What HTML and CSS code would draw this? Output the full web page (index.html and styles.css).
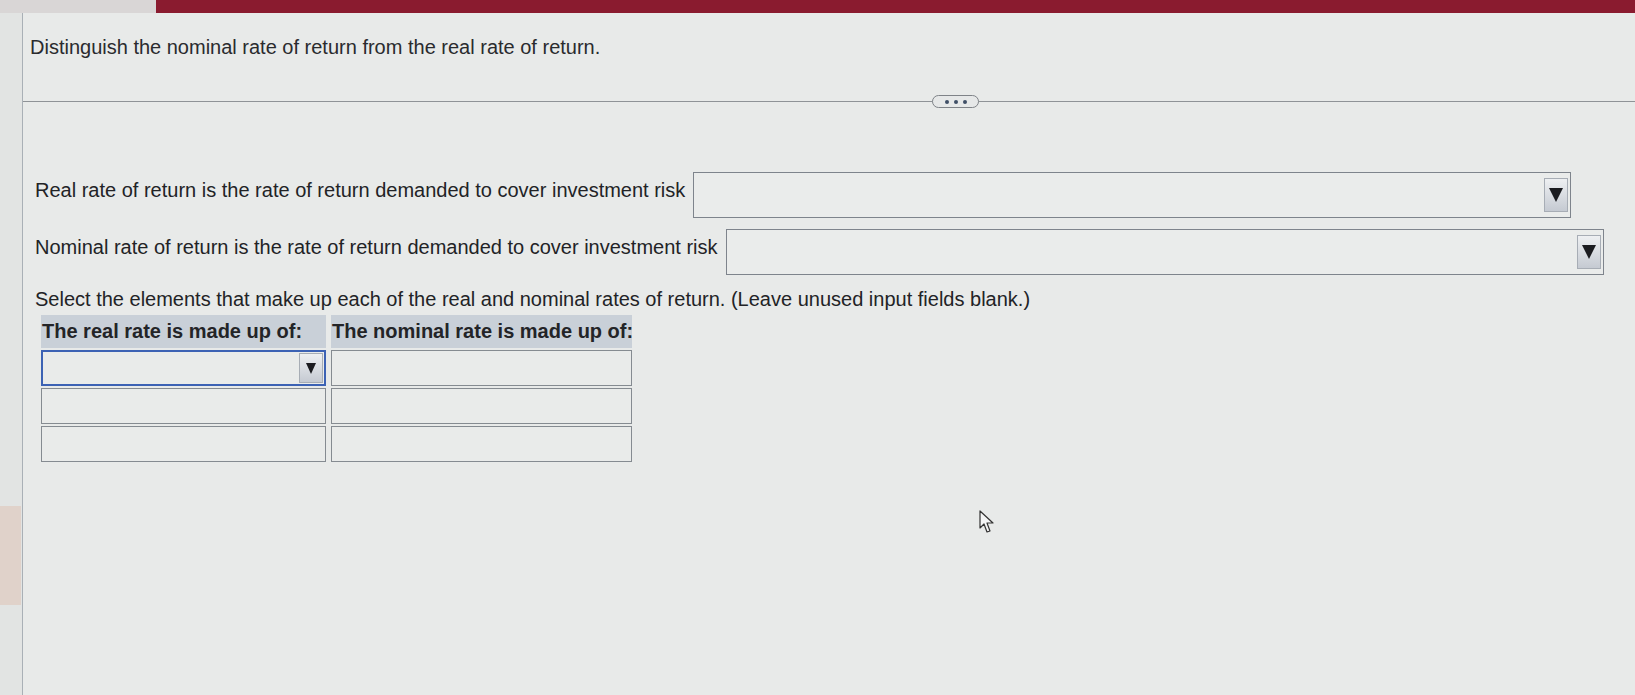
FILE: index.html
```html
<!DOCTYPE html>
<html>
<head>
<meta charset="utf-8">
<link rel="stylesheet" href="styles.css">
</head>
<body>
<div class="page">
  <div class="topbar"><div class="topbar-left"></div><div class="topbar-red"></div></div>
  <div class="layout">
    <div class="side"><div class="side-block"></div></div>
    <div class="main">
      <h1 class="title">Distinguish the nominal rate of return from the real rate of return.</h1>
      <div class="divider"><span class="pill"><i></i><i></i><i></i></span></div>
      <div class="qrow first">
        <span class="qtext">Real rate of return is the rate of return demanded to cover investment risk</span>
        <div class="select wide"><span class="btn"><span class="tri"></span></span></div>
      </div>
      <div class="qrow second">
        <span class="qtext">Nominal rate of return is the rate of return demanded to cover investment risk</span>
        <div class="select wide"><span class="btn"><span class="tri"></span></span></div>
      </div>
      <p class="instr">Select the elements that make up each of the real and nominal rates of return. (Leave unused input fields blank.)</p>
      <div class="grid">
        <div class="gh">The real rate is made up of:</div>
        <div class="gh">The nominal rate is made up of:</div>
        <div class="cell focus"><span class="btn small"><span class="tri sm"></span></span></div>
        <div class="cell"></div>
        <div class="cell"></div>
        <div class="cell"></div>
        <div class="cell"></div>
        <div class="cell"></div>
      </div>
    </div>
  </div>
  <svg class="cursor" width="20" height="26" viewBox="0 0 20 26">
    <path d="M2 2 L2 19 L6 15 L9 23 L12 22 L9 14 L15 14 Z" fill="#f4f5f5" stroke="#333" stroke-width="1.2" stroke-linejoin="round"/>
  </svg>
</div>
</body>
</html>
```

FILE: styles.css
```css
html, body {
  margin: 0;
  padding: 0;
}
body {
  background: #e5e7e6;
  font-family: "Liberation Sans", Arial, sans-serif;
  color: #1e1f21;
  width: 1635px;
  height: 695px;
  overflow: hidden;
}
.page {
  position: relative;
  height: 695px;
}
.topbar {
  display: flex;
  height: 13px;
}
.topbar-left {
  width: 156px;
  background: #d9d6d6;
}
.topbar-red {
  flex: 1;
  background: #8a1b2f;
}
.layout {
  display: grid;
  grid-template-columns: 23px 1fr;
  height: 682px;
}
.side {
  background: #e2e4e3;
  border-right: 1px solid #a9b0b6;
  padding-top: 493px;
}
.side-block {
  height: 99px;
  width: 21px;
  background: #e0d2ca;
}
.main {
  background: #e8eae9;
}
.title {
  margin: 22px 0 0 7px;
  font-size: 20px;
  line-height: 24px;
  font-weight: normal;
  color: #2a2b2e;
}
.divider {
  margin-top: 42px;
  height: 1px;
  background: #8f9397;
  position: relative;
}
.pill {
  position: absolute;
  left: 909px;
  top: -6px;
  width: 45px;
  height: 11px;
  border: 1px solid #7f8388;
  border-radius: 7px;
  background: #e6e8e8;
  display: flex;
  align-items: center;
  justify-content: center;
  gap: 5px;
}
.pill i {
  display: block;
  width: 4px;
  height: 4px;
  border-radius: 50%;
  background: #3f4f66;
}
.qrow {
  display: flex;
  align-items: center;
  gap: 8px;
  margin-left: 12px;
}
.qrow.first {
  margin-top: 70px;
}
.qrow.second {
  margin-top: 11px;
}
.qtext {
  font-size: 20px;
  line-height: 24px;
  color: #222326;
  white-space: nowrap;
  margin-bottom: 10px;
}
.select {
  box-sizing: border-box;
  height: 46px;
  border: 1px solid #7e848c;
  background: #eaeceb;
  display: flex;
  justify-content: flex-end;
  align-items: center;
  padding-right: 2px;
}
.wide {
  width: 878px;
}
.btn {
  box-sizing: border-box;
  width: 24px;
  height: 34px;
  border: 1px solid #a7adb5;
  background: linear-gradient(#eef0f2, #c5cad2);
  display: flex;
  align-items: center;
  justify-content: center;
}
.tri {
  width: 0;
  height: 0;
  border-left: 7px solid transparent;
  border-right: 7px solid transparent;
  border-top: 14px solid #1b1c20;
}
.tri.sm {
  border-left-width: 5px;
  border-right-width: 5px;
  border-top-width: 11px;
}
.btn.small {
  width: 24px;
  height: 30px;
}
.instr {
  margin: 12px 0 0 12px;
  font-size: 20px;
  line-height: 24px;
  color: #222326;
  white-space: nowrap;
}
.grid {
  margin: 4px 0 0 18px;
  display: grid;
  grid-template-columns: 285px 301px;
  grid-template-rows: 33px 36px 36px 36px;
  column-gap: 5px;
  row-gap: 2px;
  width: 591px;
}
.gh {
  background: #c9d0d8;
  font-weight: bold;
  font-size: 20px;
  line-height: 33px;
  padding-left: 1px;
  color: #232427;
  white-space: nowrap;
}
.cell {
  box-sizing: border-box;
  border: 1px solid #858b91;
  background: #e9ebea;
}
.cell.focus {
  border: 2px solid #3c62b4;
  display: flex;
  justify-content: flex-end;
  align-items: center;
  padding-right: 1px;
}
.cursor {
  position: absolute;
  left: 978px;
  top: 509px;
}
```
